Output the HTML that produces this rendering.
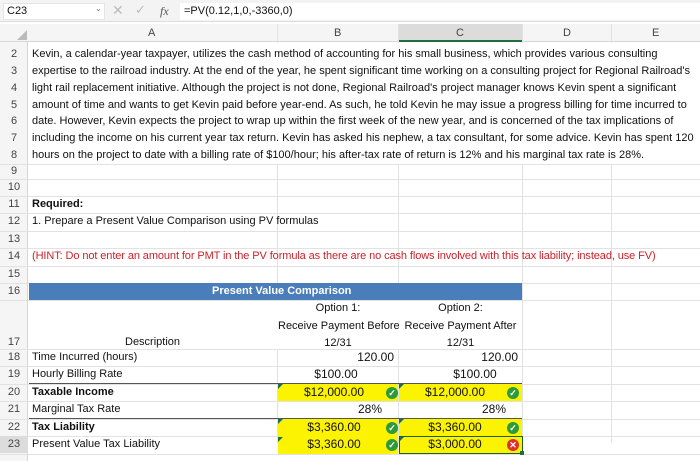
<!DOCTYPE html>
<html><head><meta charset="utf-8"><style>
*{margin:0;padding:0;box-sizing:border-box}
body{width:700px;height:461px;overflow:hidden;background:#fff;font-family:"Liberation Sans",sans-serif;font-size:11px;color:#111;position:relative}
.a{position:absolute;white-space:nowrap}
.rh{position:absolute;left:0;width:28px;text-align:center;color:#444;font-size:11px}
.hl{position:absolute;left:0;width:700px;height:1px;background:#e2e2e2}
.vl{position:absolute;top:42px;width:1px;height:419px;background:#e2e2e2}
.y{position:absolute;background:#fcf300}
.ck{position:absolute;width:12px;height:12px;border-radius:50%;background:#2e9a3a;color:#fff;font-size:9px;line-height:12px;text-align:center;font-weight:bold}
.x{background:#e0302c}
.tri{position:absolute;width:0;height:0;border-top:5px solid #1b6e55;border-right:5px solid transparent}
.b{font-weight:bold}
.n{font-size:12px}
</style></head><body>
<div class="a" style="left:0;top:0;width:700px;height:22px;background:#f3f3f3;border-bottom:1px solid #ddd"></div>
<div class="a" style="left:3px;top:3px;width:102px;height:17px;background:#fff;border:1px solid #e5e5e5"></div>
<div class="a" style="left:7px;top:5px;font-size:11px">C23</div>
<div class="a" style="left:95px;top:4px;font-size:8px;color:#777">⌄</div>
<div class="a" style="left:112px;top:2px;font-size:14px;color:#bbb">✕</div>
<div class="a" style="left:135px;top:2px;font-size:13px;color:#bbb">✓</div>
<div class="a" style="left:160px;top:4px;font-style:italic;font-family:'Liberation Serif',serif;font-size:12px;color:#555">fx</div>
<div class="a" style="left:180px;top:3px;width:520px;height:17px;background:#fff"></div>
<div class="a" style="left:184px;top:5px">=PV(0.12,1,0,-3360,0)</div>
<div class="a" style="left:0;top:24px;width:700px;height:18px;background:#f5f5f5;border-bottom:1px solid #d6d6d6"></div>
<div class="a" style="left:398px;top:24px;width:124px;height:18px;background:#dcdcdc;border-bottom:2px solid #1e6e3e"></div>
<div class="a" style="left:17px;top:30px;width:0;height:0;border-bottom:10px solid #bbb;border-left:10px solid transparent"></div>
<div class="a" style="left:148px;top:27px;color:#444">A</div>
<div class="a" style="left:334px;top:27px;color:#444">B</div>
<div class="a" style="left:456px;top:27px;color:#444">C</div>
<div class="a" style="left:563px;top:27px;color:#444">D</div>
<div class="a" style="left:652px;top:27px;color:#444">E</div>
<div class="a" style="left:0;top:42px;width:28px;height:419px;background:#f5f5f5;border-right:1px solid #d6d6d6"></div>
<div class="vl" style="left:277px;top:24px"></div><div class="vl" style="left:398px;top:24px"></div><div class="vl" style="left:522px;top:24px"></div><div class="vl" style="left:611px;top:24px"></div>
<div class="hl" style="top:164px"></div><div class="hl" style="top:179px"></div><div class="hl" style="top:196px"></div><div class="hl" style="top:213px"></div><div class="hl" style="top:231px"></div><div class="hl" style="top:248px"></div><div class="hl" style="top:266px"></div><div class="hl" style="top:283px"></div><div class="hl" style="top:300px"></div><div class="hl" style="top:349px"></div><div class="hl" style="top:366px"></div><div class="hl" style="top:384px"></div><div class="hl" style="top:401px"></div><div class="hl" style="top:419px"></div><div class="hl" style="top:436px"></div><div class="hl" style="top:454px"></div>
<div class="a" style="left:29px;top:43px;width:671px;height:121px;background:#fff"></div>
<div class="rh" style="top:48px">2</div><div class="rh" style="top:65px">3</div><div class="rh" style="top:82px">4</div><div class="rh" style="top:99px">5</div><div class="rh" style="top:115px">6</div><div class="rh" style="top:132px">7</div><div class="rh" style="top:149px">8</div><div class="rh" style="top:165px">9</div><div class="rh" style="top:181px">10</div><div class="rh" style="top:198px">11</div><div class="rh" style="top:215px">12</div><div class="rh" style="top:233px">13</div><div class="rh" style="top:250px">14</div><div class="rh" style="top:268px">15</div><div class="rh" style="top:285px">16</div><div class="rh" style="top:336px">17</div><div class="rh" style="top:351px">18</div><div class="rh" style="top:368px">19</div><div class="rh" style="top:386px">20</div><div class="rh" style="top:403px">21</div><div class="rh" style="top:421px">22</div><div class="rh" style="background:#dcdcdc;height:17px;top:436px;line-height:17px">23</div>
<div class="a" style="left:32px;top:48px">Kevin, a calendar-year taxpayer, utilizes the cash method of accounting for his small business, which provides various consulting</div>
<div class="a" style="left:32px;top:65px">expertise to the railroad industry. At the end of the year, he spent significant time working on a consulting project for Regional Railroad's</div>
<div class="a" style="left:32px;top:82px">light rail replacement initiative. Although the project is not done, Regional Railroad's project manager knows Kevin spent a significant</div>
<div class="a" style="left:32px;top:99px">amount of time and wants to get Kevin paid before year-end. As such, he told Kevin he may issue a progress billing for time incurred to</div>
<div class="a" style="left:32px;top:115px">date. However, Kevin expects the project to wrap up within the first week of the new year, and is concerned of the tax implications of</div>
<div class="a" style="left:32px;top:132px">including the income on his current year tax return. Kevin has asked his nephew, a tax consultant, for some advice. Kevin has spent 120</div>
<div class="a" style="left:32px;top:149px">hours on the project to date with a billing rate of $100/hour; his after-tax rate of return is 12% and his marginal tax rate is 28%.</div>
<div class="a b" style="left:32px;top:198px">Required:</div>
<div class="a" style="left:32px;top:215px">1. Prepare a Present Value Comparison using PV formulas</div>
<div class="a" style="left:32px;top:250px;color:#d0202a;letter-spacing:-0.1px">(HINT: Do not enter an amount for PMT in the PV formula as there are no cash flows involved with this tax liability; instead, use FV)</div>
<div class="a" style="left:29px;top:283px;width:493px;height:17px;background:#4a7ebb"></div>
<div class="a b" style="left:212px;top:285px;color:#fff">Present Value Comparison</div>
<div class="a" style="left:29px;top:301px;width:493px;height:48px;background:#fff"></div>
<div class="a" style="left:278px;top:300px;width:120px;text-align:center;line-height:17.5px">Option 1:<br>Receive Payment Before<br>12/31</div>
<div class="a" style="left:399px;top:300px;width:123px;text-align:center;line-height:17.5px">Option 2:<br>Receive Payment After<br>12/31</div>
<div class="a" style="left:125px;top:336px">Description</div>
<div class="a" style="left:32px;top:351px">Time Incurred (hours)</div>
<div class="a" style="left:32px;top:368px">Hourly Billing Rate</div>
<div class="a b" style="left:32px;top:386px">Taxable Income</div>
<div class="a" style="left:32px;top:403px">Marginal Tax Rate</div>
<div class="a b" style="left:32px;top:421px">Tax Liability</div>
<div class="a" style="left:32px;top:438px">Present Value Tax Liability</div>
<div class="a" style="left:29px;top:383px;width:493px;height:1px;background:#555"></div>
<div class="a" style="left:29px;top:418px;width:493px;height:1px;background:#555"></div>
<div class="a n" style="left:300px;top:350px;width:94px;text-align:right">120.00</div>
<div class="a n" style="left:420px;top:350px;width:98px;text-align:right">120.00</div>
<div class="a n" style="left:278px;top:367px;width:116px;text-align:center">$100.00</div>
<div class="a n" style="left:420px;top:367px;width:110px;text-align:center">$100.00</div>
<div class="a n" style="left:300px;top:402px;width:82px;text-align:right">28%</div>
<div class="a n" style="left:420px;top:402px;width:86px;text-align:right">28%</div>
<div class="y" style="left:278px;top:384px;width:120px;height:17px"></div>
<div class="y" style="left:399px;top:384px;width:123px;height:17px"></div>
<div class="y" style="left:278px;top:419px;width:120px;height:35px"></div>
<div class="y" style="left:399px;top:419px;width:123px;height:35px"></div>
<div class="tri" style="left:278px;top:384px"></div><div class="tri" style="left:399px;top:384px"></div>
<div class="tri" style="left:278px;top:419px"></div><div class="tri" style="left:399px;top:419px"></div>
<div class="tri" style="left:278px;top:437px"></div><div class="tri" style="left:399px;top:437px"></div>
<div class="a" style="left:399px;top:436px;width:124px;height:18px;border:1.5px solid #1e5e2e"></div>
<div class="a" style="left:520px;top:451px;width:4px;height:4px;background:#1e6e3e"></div>
<div class="a n" style="left:278px;top:385px;width:112px;text-align:center">$12,000.00</div>
<div class="a n" style="left:399px;top:385px;width:112px;text-align:center">$12,000.00</div>
<div class="a n" style="left:278px;top:420px;width:112px;text-align:center">$3,360.00</div>
<div class="a n" style="left:399px;top:420px;width:112px;text-align:center">$3,360.00</div>
<div class="a n" style="left:278px;top:437px;width:112px;text-align:center">$3,360.00</div>
<div class="a n" style="left:399px;top:437px;width:112px;text-align:center">$3,000.00</div>
<div class="ck" style="left:386px;top:387px">✓</div><div class="ck" style="left:507px;top:387px">✓</div>
<div class="ck" style="left:386px;top:422px">✓</div><div class="ck" style="left:507px;top:422px">✓</div>
<div class="ck" style="left:386px;top:439px">✓</div><div class="ck x" style="left:507px;top:439px">✕</div>
</body></html>
